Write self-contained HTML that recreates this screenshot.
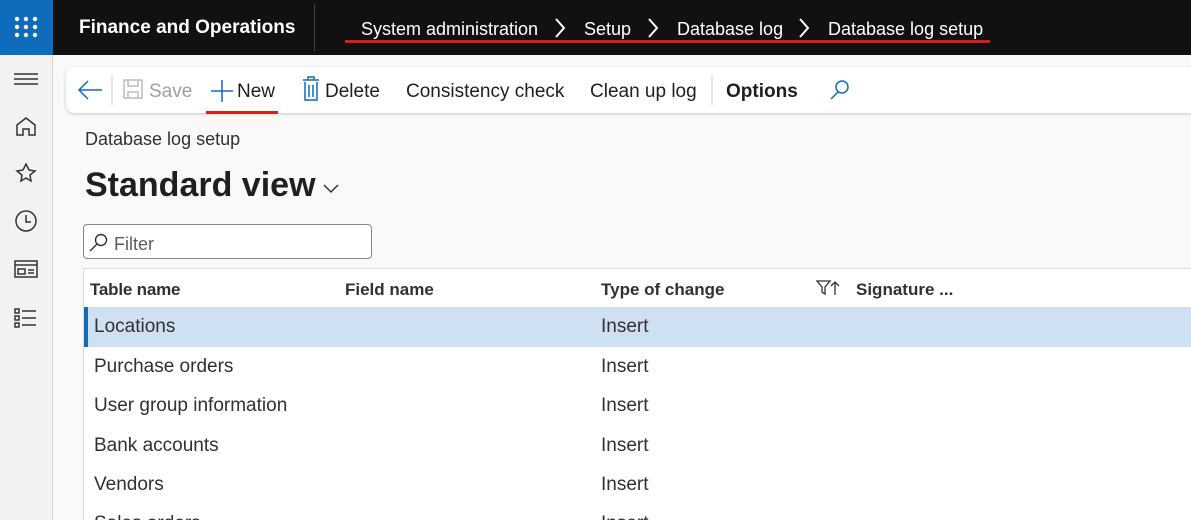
<!DOCTYPE html>
<html><head><style>
*{margin:0;padding:0;box-sizing:border-box}
html,body{width:1191px;height:520px;overflow:hidden}
body{background:#faf9f8;font-family:"Liberation Sans",sans-serif;position:relative;color:#201f1e}
.top{position:absolute;left:0;top:0;width:1191px;height:55px;background:#111}
.waffle{position:absolute;left:0;top:0;width:53px;height:55px;background:#0f6cbd}
.t{position:absolute;white-space:nowrap}
.side{position:absolute;left:0;top:55px;width:53px;height:465px;background:#f3f2f1;border-right:1px solid #d6d6d6}
.tb{position:absolute;left:66px;top:67px;width:1140px;height:46px;background:#fff;border-radius:8px;box-shadow:0 1px 3px rgba(0,0,0,.2)}
.grid{position:absolute;left:83px;top:268px;width:1120px;height:260px;background:#fff;border:1px solid #ddd}
.row{position:absolute;left:0;width:1120px;height:40px;font-size:19px;color:#323130}
</style></head><body>
<div class="top"></div>
<div class="waffle"><svg width="53" height="55"><g fill="#fff">
<circle cx="17" cy="19" r="2.2"/><circle cx="26" cy="19" r="2.2"/><circle cx="35" cy="19" r="2.2"/>
<circle cx="17" cy="27" r="2.2"/><circle cx="26" cy="27" r="2.2"/><circle cx="35" cy="27" r="2.2"/>
<circle cx="17" cy="35" r="2.2"/><circle cx="26" cy="35" r="2.2"/><circle cx="35" cy="35" r="2.2"/></g></svg></div>
<div class="t" style="left:79px;top:17px;font-size:19px;font-weight:bold;color:#fff">Finance and Operations</div>
<div style="position:absolute;left:314px;top:4px;width:1px;height:47px;background:#444"></div>
<div class="t" style="left:361px;top:19px;font-size:18px;color:#fff">System administration</div>
<div class="t" style="left:584px;top:19px;font-size:18px;color:#fff">Setup</div>
<div class="t" style="left:677px;top:19px;font-size:18px;color:#fff">Database log</div>
<div class="t" style="left:828px;top:19px;font-size:18px;color:#fff">Database log setup</div>
<svg style="position:absolute;left:0;top:0" width="1191" height="55" fill="none" stroke="#fff" stroke-width="2">
<path d="M556 19l8 9-8 9M649 19l8 9-8 9M800 19l8 9-8 9"/></svg>
<div style="position:absolute;left:345px;top:40px;width:645px;height:3px;background:#d21f1f"></div>
<div class="side"></div>
<svg style="position:absolute;left:0;top:55px" width="53" height="280" fill="none" stroke="#333" stroke-width="1.5">
<path d="M14 19h24M14 24h24M14 29h24"/>
<path d="M17 80v-10l9-7 9 7v10h-6v-6h-6v6z"/>
<path d="M26 109l3 6 6 1-5 4 1 6-5-3-5 3 1-6-5-4 6-1z"/>
<circle cx="26" cy="166" r="10"/><path d="M26 160v7h5"/>
<rect x="15" y="206" width="22" height="16"/><path d="M15 210h22M18 214h7v5h-7zM28 215h6M28 218h6"/>
<path d="M15 254h4v4h-4zM15 261h4v4h-4zM15 268h4v4h-4zM22 256h14M22 263h14M22 270h14"/></svg>
<div class="tb"></div>
<svg style="position:absolute;left:66px;top:67px" width="800" height="46" fill="none" stroke-width="1.5">
<path d="M36 23H14M22 14l-9 9 9 9" stroke="#0f6cbd"/>
<path d="M46 8v30" stroke="#ddd"/>
<rect x="58" y="13" width="18" height="18" stroke="#bbb"/><path d="M62 13v6h10v-6M62 31v-6h10v6" stroke="#bbb"/>
<path d="M156 13v22M145 24h22" stroke="#0f6cbd"/>
<path d="M237 13h16M242 13v-3h6v3M239 15v18h12v-18M243 18v12M247 18v12" stroke="#0f6cbd"/>
<path d="M646 8v30" stroke="#ddd"/>
<circle cx="776" cy="20" r="6" stroke="#0f6cbd"/><path d="M772 25l-7 7" stroke="#0f6cbd"/></svg>
<div class="t" style="left:149px;top:81px;font-size:19px;color:#a19f9d">Save</div>
<div class="t" style="left:237px;top:81px;font-size:19px">New</div>
<div style="position:absolute;left:206px;top:111px;width:72px;height:3px;background:#d21f1f"></div>
<div class="t" style="left:325px;top:81px;font-size:19px">Delete</div>
<div class="t" style="left:406px;top:81px;font-size:19px">Consistency check</div>
<div class="t" style="left:590px;top:81px;font-size:19px">Clean up log</div>
<div class="t" style="left:726px;top:81px;font-size:19px;font-weight:bold">Options</div>
<div class="t" style="left:85px;top:129px;font-size:18px;color:#323130">Database log setup</div>
<div class="t" style="left:85px;top:166px;font-size:34px;font-weight:bold">Standard view</div>
<svg style="position:absolute;left:322px;top:182px" width="20" height="12" fill="none" stroke="#333" stroke-width="1.5"><path d="M2 3l7 7 7-7"/></svg>
<div style="position:absolute;left:83px;top:224px;width:289px;height:35px;border:1px solid #8a8886;border-radius:4px;background:#fff"></div>
<svg style="position:absolute;left:88px;top:232px" width="22" height="22" fill="none" stroke="#333" stroke-width="1.4"><circle cx="13" cy="8" r="5.5"/><path d="M9 12l-7 7"/></svg>
<div class="t" style="left:114px;top:234px;font-size:18px;color:#605e5c">Filter</div>
<div class="grid">
<div class="t" style="left:6px;top:11px;font-size:17px;font-weight:bold;color:#323130;letter-spacing:-.2px">Table name</div>
<div class="t" style="left:261px;top:11px;font-size:17px;font-weight:bold;color:#323130">Field name</div>
<div class="t" style="left:517px;top:11px;font-size:17px;font-weight:bold;color:#323130">Type of change</div>
<svg style="position:absolute;left:732px;top:10px" width="26" height="18" fill="none" stroke="#333" stroke-width="1.3"><path d="M1 2h13l-5 6v7l-3-2v-5z"/><path d="M19 16V3M15 7l4-4 4 4"/></svg>
<div class="t" style="left:772px;top:11px;font-size:17px;font-weight:bold;color:#323130">Signature ...</div>
<div class="row" style="top:38px;background:#cfe0f3"><div style="position:absolute;left:0;top:0;width:4px;height:40px;background:#0f6cbd"></div></div>
</div>
<div class="t" style="left:94px;top:316px;font-size:19px;color:#323130">Locations</div><div class="t" style="left:601px;top:316px;font-size:19px;color:#323130">Insert</div>
<div class="t" style="left:94px;top:356px;font-size:19px;color:#323130">Purchase orders</div><div class="t" style="left:601px;top:356px;font-size:19px;color:#323130">Insert</div>
<div class="t" style="left:94px;top:395px;font-size:19px;color:#323130">User group information</div><div class="t" style="left:601px;top:395px;font-size:19px;color:#323130">Insert</div>
<div class="t" style="left:94px;top:435px;font-size:19px;color:#323130">Bank accounts</div><div class="t" style="left:601px;top:435px;font-size:19px;color:#323130">Insert</div>
<div class="t" style="left:94px;top:474px;font-size:19px;color:#323130">Vendors</div><div class="t" style="left:601px;top:474px;font-size:19px;color:#323130">Insert</div>
<div class="t" style="left:94px;top:513px;font-size:19px;color:#323130">Sales orders</div><div class="t" style="left:601px;top:513px;font-size:19px;color:#323130">Insert</div>
</body></html>
